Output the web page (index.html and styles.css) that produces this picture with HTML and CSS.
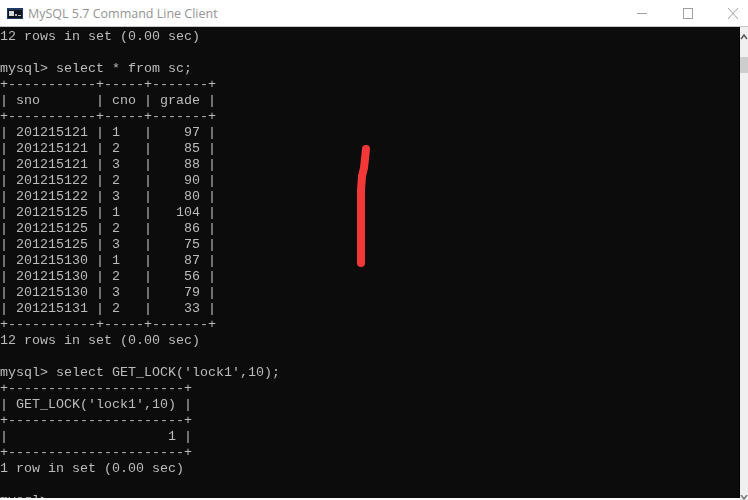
FILE: index.html
```html
<!DOCTYPE html>
<html lang="en">
<head>
<meta charset="utf-8">
<title>MySQL 5.7 Command Line Client</title>
<link rel="stylesheet" href="styles.css">
</head>
<body>
<div class="window">
  <header class="titlebar">
    <svg class="app-icon" width="16" height="11" viewBox="0 0 16 11"><rect width="16" height="11" fill="#1f3a63"/><rect x="1" y="2" width="14" height="8" fill="#10141c"/><rect x="2" y="3" width="5" height="5" fill="#d8d8d8"/><rect x="8" y="6" width="2" height="2" fill="#b8b8b8"/><rect x="11" y="7" width="3" height="1" fill="#b8b8b8"/></svg>
    <span class="title">MySQL 5.7 Command Line Client</span>
    <div class="controls">
      <svg class="ctl" width="10" height="11" viewBox="0 0 10 11"><path d="M0 5.500h10" stroke="#a0a0a0" fill="none"/></svg>
      <svg class="ctl" width="10" height="11" viewBox="0 0 10 11"><rect x="0.500" y="0.500" width="9" height="10" stroke="#a0a0a0" fill="none"/></svg>
      <svg class="ctl" width="10" height="11" viewBox="0 0 10 11"><path d="M0 0l10 11M10 0l-10 11" stroke="#a0a0a0" fill="none"/></svg>
    </div>
  </header>
  <div class="body">
    <main class="console">
<pre class="output">12 rows in set (0.00 sec)

mysql&gt; select * from sc;
+-----------+-----+-------+
| sno       | cno | grade |
+-----------+-----+-------+
| 201215121 | 1   |    97 |
| 201215121 | 2   |    85 |
| 201215121 | 3   |    88 |
| 201215122 | 2   |    90 |
| 201215122 | 3   |    80 |
| 201215125 | 1   |   104 |
| 201215125 | 2   |    86 |
| 201215125 | 3   |    75 |
| 201215130 | 1   |    87 |
| 201215130 | 2   |    56 |
| 201215130 | 3   |    79 |
| 201215131 | 2   |    33 |
+-----------+-----+-------+
12 rows in set (0.00 sec)

mysql&gt; select GET_LOCK('lock1',10);
+----------------------+
| GET_LOCK('lock1',10) |
+----------------------+
|                    1 |
+----------------------+
1 row in set (0.00 sec)

mysql&gt;</pre>
      <svg class="scribble" width="24" height="130" viewBox="0 0 24 130"><path d="M12 5L10 24L8 32L7 46L7 78L7 119" stroke="#f43838" stroke-width="8" stroke-linecap="round" stroke-linejoin="round" fill="none"/></svg>
    </main>
    <aside class="scrollbar">
      <svg class="arrow" width="8" height="8" viewBox="0 0 8 8"><path d="M1 6l3-4 3 4" stroke="#555" stroke-width="1.500" fill="none"/></svg>
      <div class="thumb"></div>
      <svg class="arrow-down" width="8" height="5" viewBox="0 0 8 5"><path d="M1 0l3 4 3-4" stroke="#777" stroke-width="1.500" fill="none"/></svg>
    </aside>
  </div>
</div>
</body>
</html>
```

FILE: styles.css
```css
html, body { margin: 0; padding: 0; background: #fff; }
.window { width: 748px; height: 500px; display: flex; flex-direction: column; overflow: hidden; }
.titlebar { height: 27px; flex: none; display: flex; align-items: center; padding-left: 7px; background: #fff; border-bottom: 1px solid #c8c8c8; box-sizing: border-box; }
.app-icon { flex: none; margin-right: 5px; }
.title { font: 12.500px "Open Sans", "Liberation Sans", sans-serif; color: #949494; }
.controls { margin-left: auto; display: flex; gap: 35.500px; padding-right: 10px; }
.ctl { display: block; }
.body { flex: 1; display: flex; min-height: 0; }
.console { flex: 1; position: relative; background: #0c0c0c; overflow: hidden; margin-bottom: 2px; border-right: 1px solid #000; }
.output { margin: 0; padding-top: 2px; font: 13.333px/16px "Liberation Mono", "Courier New", monospace; color: #bcbcbc; filter: blur(0.5px); }
.scribble { position: absolute; left: 354px; top: 117px; }
.scrollbar { width: 8px; flex: none; background: #f0f0f0; display: flex; flex-direction: column; }
.arrow { margin-top: 6px; }
.thumb { margin-top: 16px; height: 16px; background: #cdcdcd; }
.arrow-down { margin-top: auto; }
```
